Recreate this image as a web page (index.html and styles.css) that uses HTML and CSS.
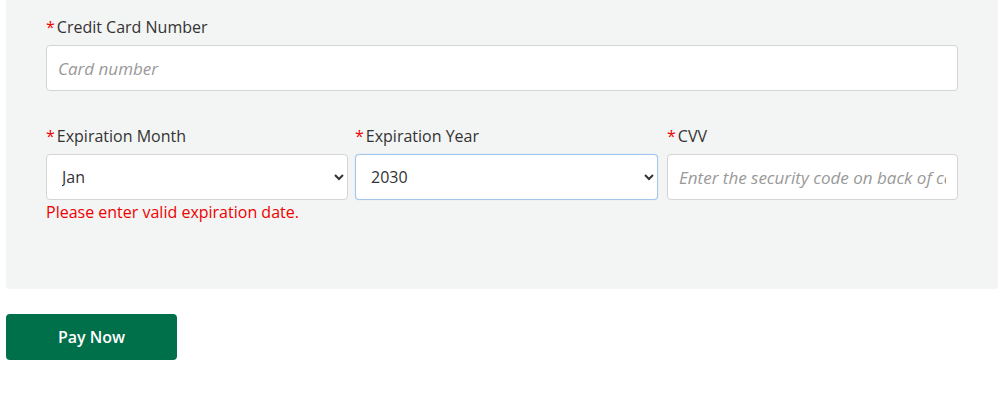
FILE: index.html
```html
<!DOCTYPE html>
<html lang="en">
<head>
<meta charset="utf-8">
<title>Payment</title>
<link rel="stylesheet" href="styles.css">
</head>
<body>
<div class="panel">
  <div class="field">
    <label class="label" for="card"><span class="req">*</span>Credit Card Number</label>
    <input class="control text" id="card" type="text" placeholder="Card number">
  </div>
  <div class="row">
    <div class="col">
      <label class="label" for="month"><span class="req">*</span>Expiration Month</label>
      <select class="control select" id="month">
        <option>Jan</option><option>Feb</option><option>Mar</option>
      </select>
      <div class="error">Please enter valid expiration date.</div>
    </div>
    <div class="col">
      <label class="label" for="year"><span class="req">*</span>Expiration Year</label>
      <select class="control select focused" id="year">
        <option>2030</option><option>2031</option>
      </select>
    </div>
    <div class="col">
      <label class="label" for="cvv"><span class="req">*</span>CVV</label>
      <input class="control text" id="cvv" type="text" placeholder="Enter the security code on back of card">
    </div>
  </div>
</div>
<button class="pay" type="button">Pay Now</button>
</body>
</html>
```

FILE: styles.css
```css
html, body {
  margin: 0;
  padding: 0;
  background: #fff;
  font-family: "Open Sans", "Noto Sans", sans-serif;
  color: #333;
}

.panel {
  margin: 0 1px 0 6px;
  padding: 15px 40px 65px 40px;
  background: #f3f4f4;
  border-radius: 0 0 4px 4px;
}

.label {
  display: block;
  font-size: 16px;
  line-height: 24px;
  margin-bottom: 6px;
  color: #333;
}

.req {
  color: #e00;
  margin: 0 2px 0 0;
}

.control {
  display: block;
  box-sizing: border-box;
  width: 100%;
  height: 46px;
  margin: 0;
  padding: 0 11px;
  border: 1px solid #d4d4d4;
  border-radius: 4px;
  background: #fff;
  font-family: "Open Sans", "Noto Sans", sans-serif;
  font-size: 16px;
  color: #333;
  outline: none;
}

.text {
  font-size: 17px;
}

.control::placeholder {
  color: #999;
  font-style: italic;
  opacity: 1;
}

.select {
  padding-left: 11px;
  padding-right: 8px;
}

.focused {
  border-color: #a3c7ec;
  box-shadow: 0 0 1px #a3c7ec;
}

.row {
  display: grid;
  grid-template-columns: 309px 312px 1fr;
  margin-top: 33px;
}

.col:nth-child(1) .control { width: 302px; }
.col:nth-child(2) .control { width: 303px; }

.error {
  color: #e00;
  font-size: 16px;
  line-height: 24px;
}

.pay {
  display: block;
  margin: 25px 0 0 6px;
  width: 171px;
  height: 46px;
  border: none;
  border-radius: 4px;
  background: #00704a;
  color: #fff;
  font-family: "Open Sans", "Noto Sans", sans-serif;
  font-size: 16px;
  font-weight: 600;
  cursor: pointer;
}
```
